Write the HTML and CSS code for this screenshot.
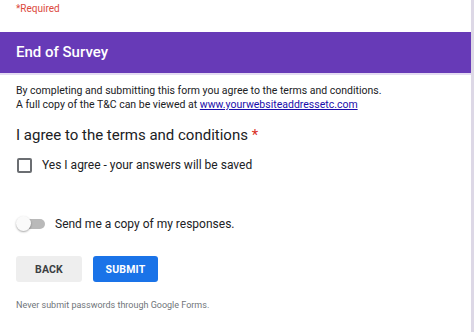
FILE: index.html
```html
<!DOCTYPE html>
<html>
<head>
<meta charset="utf-8">
<link rel="stylesheet" href="styles.css">
</head>
<body>
<div class="page">
  <main class="card">
    <div class="required">*Required</div>
    <div class="section-head">End of Survey</div>
    <div class="desc">
      <div>By completing and submitting this form you agree to the terms and conditions.</div>
      <div>A full copy of the T&amp;C can be viewed at <a class="link" href="#">www.yourwebsiteaddressetc.com</a></div>
    </div>
    <div class="question">I agree to the terms and conditions <span class="star">*</span></div>
    <label class="check-row">
      <span class="checkbox"></span>
      <span>Yes I agree - your answers will be saved</span>
    </label>
    <div class="toggle-row">
      <span class="toggle"><span class="track"></span><span class="knob"></span></span>
      <span>Send me a copy of my responses.</span>
    </div>
    <div class="buttons">
      <button class="btn back">BACK</button>
      <button class="btn submit">SUBMIT</button>
    </div>
    <div class="note">Never submit passwords through Google Forms.</div>
  </main>
  <div class="rail"></div>
</div>
</body>
</html>
```
FILE: styles.css
```css
html, body {
  margin: 0;
  padding: 0;
  background: #ffffff;
}
body {
  font-family: Roboto, "Liberation Sans", Arial, sans-serif;
  color: #202124;
  width: 474px;
  height: 332px;
  overflow: hidden;
}
.page {
  display: flex;
  height: 332px;
}
.card {
  width: 471px;
  background: #fff;
  display: flex;
  flex-direction: column;
}
.rail {
  width: 3px;
  background: #ddd8e6;
}
.required {
  color: #dc4a3d;
  font-size: 10px;
  line-height: 18px;
  padding: 0 16px;
  height: 32px;
}
.section-head {
  background: #673ab7;
  color: #fff;
  font-size: 15px;
  font-weight: 500;
  height: 41px;
  line-height: 40px;
  padding: 0 16px;
  border-bottom: 2px solid #e4dcf2;
  box-sizing: content-box;
}
.desc {
  font-size: 10.5px;
  line-height: 14px;
  padding: 9px 16px 0;
  color: #202124;
}
.link {
  color: #1a0dab;
  text-decoration: underline;
}
.question {
  font-size: 15px;
  line-height: 20px;
  padding: 13px 16px 0;
}
.star {
  color: #d93025;
}
.check-row {
  display: flex;
  align-items: center;
  gap: 10px;
  padding: 10px 17px 0;
  font-size: 12px;
  line-height: 20px;
}
.checkbox {
  width: 11px;
  height: 11px;
  border: 2px solid #6b6e72;
  border-radius: 2px;
  flex: none;
}
.toggle-row {
  display: flex;
  align-items: center;
  gap: 10px;
  padding: 39px 16px 0;
  font-size: 12px;
  line-height: 20px;
}
.toggle {
  position: relative;
  width: 29px;
  height: 16px;
  flex: none;
}
.track {
  position: absolute;
  left: 6px;
  top: 3px;
  width: 23px;
  height: 10px;
  border-radius: 5px;
  background: #b9b9b9;
}
.knob {
  position: absolute;
  left: 0;
  top: 0;
  width: 15px;
  height: 15px;
  border-radius: 50%;
  background: #fafafa;
  box-shadow: 0 1px 2px rgba(0,0,0,0.35);
}
.buttons {
  display: flex;
  gap: 11px;
  padding: 22px 16px 0;
}
.btn {
  height: 26px;
  border: none;
  border-radius: 3px;
  font-family: Roboto, "Liberation Sans", Arial, sans-serif;
  font-size: 10.5px;
  font-weight: 700;
  letter-spacing: 0.2px;
  padding: 0;
}
.back {
  width: 66px;
  background: #eeeeee;
  color: #3c4043;
}
.submit {
  width: 65px;
  background: #1a73e8;
  color: #fff;
}
.note {
  font-size: 9px;
  line-height: 14px;
  color: #70757a;
  padding: 16px 16px 0;
}
```
